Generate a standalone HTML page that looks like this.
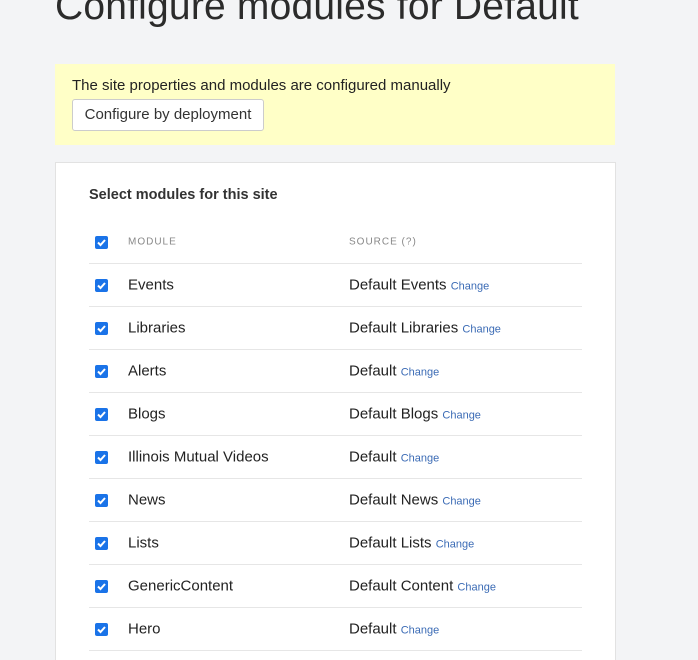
<!DOCTYPE html>
<html><head><meta charset="utf-8"><style>
*{box-sizing:border-box;margin:0;padding:0}
html,body{width:698px;height:660px;overflow:hidden}
body{background:#f3f4f6;font-family:"Liberation Sans",sans-serif;color:#222;position:relative}
h1{position:absolute;left:55px;top:-13px;font-size:39px;font-weight:normal;line-height:40px;color:#2b2b2b;white-space:nowrap;letter-spacing:0.2px}
.banner{position:absolute;left:55px;top:64px;width:560px;height:81px;background:#ffffc7}
.banner p{position:absolute;left:17px;top:13px;font-size:15px;color:#222}
.btn{position:absolute;left:17px;top:35px;width:192px;height:32px;border:1px solid #ccc;border-radius:3px;background:#fff;font-size:15px;line-height:30px;text-align:center;color:#333}
.card{position:absolute;left:55px;top:162px;width:561px;height:520px;background:#fff;border:1px solid #e2e2e2}
.card h2{position:absolute;left:33px;top:24px;font-size:14.5px;font-weight:bold;color:#333}
.row{position:absolute;left:33px;width:493px;height:43px;border-bottom:1px solid #e6e6e6;font-size:15px}
.cb{position:absolute;left:6px;top:50%;margin-top:-6px;width:13px;height:13px;background:#1a73e8;border-radius:2px}
.cb svg{position:absolute;left:1px;top:1px}
.m{position:absolute;left:39px;top:50%;transform:translateY(-50%)}
.s{position:absolute;left:260px;top:50%;transform:translateY(-50%);white-space:nowrap}
.s a{color:#3b6bb5;font-size:11px;text-decoration:none}
.hd{font-size:10px;color:#888;letter-spacing:1px}
</style></head><body>
<h1>Configure modules for Default</h1>
<div class="banner"><p>The site properties and modules are configured manually</p><div class="btn">Configure by deployment</div></div>
<div class="card">
<h2>Select modules for this site</h2>
<div class="row" style="top:58px"><span class="cb"><svg width="11" height="11"><path d="M2 5.5l2.5 2.5L9 3" stroke="#fff" stroke-width="2" fill="none"/></svg></span><span class="m hd">MODULE</span><span class="s hd">SOURCE (?)</span></div>
<div class="row" style="top:101px"><span class="cb"><svg width="11" height="11"><path d="M2 5.5l2.5 2.5L9 3" stroke="#fff" stroke-width="2" fill="none"/></svg></span><span class="m">Events</span><span class="s">Default Events <a>Change</a></span></div>
<div class="row" style="top:144px"><span class="cb"><svg width="11" height="11"><path d="M2 5.5l2.5 2.5L9 3" stroke="#fff" stroke-width="2" fill="none"/></svg></span><span class="m">Libraries</span><span class="s">Default Libraries <a>Change</a></span></div>
<div class="row" style="top:187px"><span class="cb"><svg width="11" height="11"><path d="M2 5.5l2.5 2.5L9 3" stroke="#fff" stroke-width="2" fill="none"/></svg></span><span class="m">Alerts</span><span class="s">Default <a>Change</a></span></div>
<div class="row" style="top:230px"><span class="cb"><svg width="11" height="11"><path d="M2 5.5l2.5 2.5L9 3" stroke="#fff" stroke-width="2" fill="none"/></svg></span><span class="m">Blogs</span><span class="s">Default Blogs <a>Change</a></span></div>
<div class="row" style="top:273px"><span class="cb"><svg width="11" height="11"><path d="M2 5.5l2.5 2.5L9 3" stroke="#fff" stroke-width="2" fill="none"/></svg></span><span class="m">Illinois Mutual Videos</span><span class="s">Default <a>Change</a></span></div>
<div class="row" style="top:316px"><span class="cb"><svg width="11" height="11"><path d="M2 5.5l2.5 2.5L9 3" stroke="#fff" stroke-width="2" fill="none"/></svg></span><span class="m">News</span><span class="s">Default News <a>Change</a></span></div>
<div class="row" style="top:359px"><span class="cb"><svg width="11" height="11"><path d="M2 5.5l2.5 2.5L9 3" stroke="#fff" stroke-width="2" fill="none"/></svg></span><span class="m">Lists</span><span class="s">Default Lists <a>Change</a></span></div>
<div class="row" style="top:402px"><span class="cb"><svg width="11" height="11"><path d="M2 5.5l2.5 2.5L9 3" stroke="#fff" stroke-width="2" fill="none"/></svg></span><span class="m">GenericContent</span><span class="s">Default Content <a>Change</a></span></div>
<div class="row" style="top:445px"><span class="cb"><svg width="11" height="11"><path d="M2 5.5l2.5 2.5L9 3" stroke="#fff" stroke-width="2" fill="none"/></svg></span><span class="m">Hero</span><span class="s">Default <a>Change</a></span></div>
</div>
</body></html>
